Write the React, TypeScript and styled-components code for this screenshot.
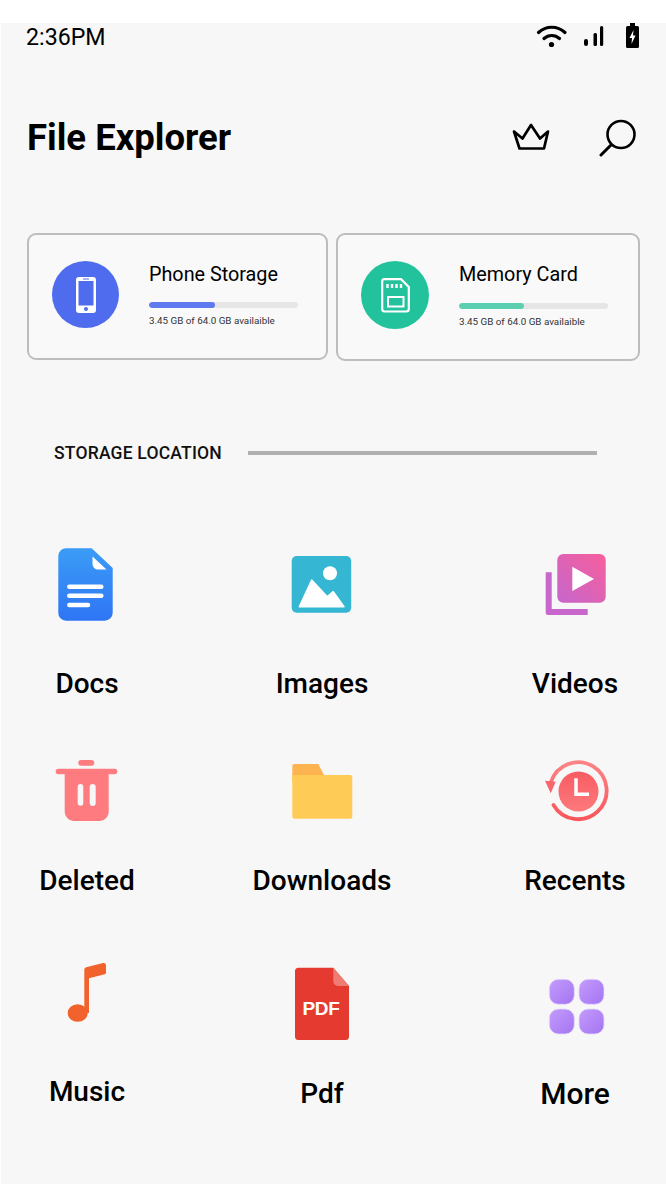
import React from 'react';
import styled, { createGlobalStyle } from 'styled-components';

const GlobalStyle = createGlobalStyle`
  html, body {
    margin: 0;
    padding: 0;
    background: #ffffff;
  }
  body {
    font-family: Roboto, "Liberation Sans", sans-serif;
    color: #000000;
  }
`;

const CrownIcon = () => (
  <svg width="40" height="30" viewBox="0 0 40 30" fill="none">
    <path d="M7.500 25.500H32L36 8.500L28 15.500L19 2L10.500 15.500L2 8.500Z" stroke="#000" strokeWidth="2.700" strokeLinejoin="round" />
  </svg>
);

const SearchIcon = () => (
  <svg width="40" height="38" viewBox="0 0 40 38" fill="none" stroke="#000" strokeLinecap="round">
    <circle cx="23" cy="15.500" r="13.500" strokeWidth="2.600" />
    <path d="M13 26L3 36" strokeWidth="3" />
  </svg>
);

const WifiIcon = () => (
  <svg width="32" height="24" viewBox="0 0 32 24" fill="none" stroke="#000" strokeWidth="3.200" strokeLinecap="round">
    <path d="M2.500 8.500C10 1.500 21.500 1.500 29 8.500" />
    <path d="M8 14.500C12.500 10.500 19 10.500 23.500 14.500" />
    <circle cx="15.500" cy="20.500" r="2.600" fill="#000" stroke="none" />
  </svg>
);

const SignalIcon = () => (
  <svg width="26" height="22" viewBox="0 0 26 22" fill="#000">
    <rect x="0" y="14" width="4" height="7" rx="2" />
    <rect x="9.500" y="8" width="3.500" height="13" rx="1.500" />
    <rect x="16" y="1" width="3.200" height="20" rx="1.500" />
  </svg>
);

const BatteryIcon = () => (
  <svg width="13" height="25" viewBox="0 0 13 25" fill="#000">
    <rect x="4" y="0" width="5" height="4" />
    <rect x="0" y="3" width="13" height="22" rx="1.500" />
    <path d="M7.500 7L3.500 15H6L5.500 21L9.500 12.500H7Z" fill="#fff" />
  </svg>
);

const PhoneGlyph = () => (
  <svg width="20" height="36" viewBox="0 0 20 36" fill="#fff">
    <path fillRule="evenodd" d="M3 0H17A3 3 0 0 1 20 3V33A3 3 0 0 1 17 36H3A3 3 0 0 1 0 33V3A3 3 0 0 1 3 0ZM2.500 4V28.500H17.500V4ZM7 1.500V2.500H13V1.500ZM10 30A2 2 0 1 0 10 34A2 2 0 1 0 10 30Z" />
  </svg>
);

const SdGlyph = () => (
  <svg width="29" height="35" viewBox="0 0 29 35" fill="none" stroke="#fff">
    <path d="M3 1.200H20L27.800 9V31A2.500 2.500 0 0 1 25.300 33.500H3.500A2.500 2.500 0 0 1 1.200 31V3A2 2 0 0 1 3 1.200Z" strokeWidth="2.200" />
    <rect x="7" y="19" width="15.500" height="9.500" strokeWidth="2" />
    <path d="M6.500 6V10M11 6V10M15.500 6V10M20 6V10" strokeWidth="2.400" />
  </svg>
);

const DocsIcon = () => (
  <svg width="80" height="80" viewBox="0 0 80 80">
    <defs>
      <linearGradient id="docsFill" x1="0" y1="0" x2="0" y2="1">
        <stop offset="0" stopColor="#3b9cf6" />
        <stop offset="1" stopColor="#2f75f5" />
      </linearGradient>
    </defs>
    <path d="M19 3.300H44.700L65.700 23V67.700A8 8 0 0 1 57.700 75.700H19A7.700 7.700 0 0 1 11.300 67.700V11A7.700 7.700 0 0 1 19 3.300Z" fill="url(#docsFill)" />
    <path d="M45.500 11.500L59.500 24.500H51A5.500 5.500 0 0 1 45.500 19Z" fill="#fff" />
    <path d="M22.300 41.700H54.300M22.300 50.700H54.300M22.300 60H41" stroke="#fff" strokeWidth="4.500" strokeLinecap="round" />
  </svg>
);

const ImagesIcon = () => (
  <svg width="80" height="80" viewBox="0 0 80 80">
    <rect x="9.700" y="11" width="59.500" height="56.700" rx="5" fill="#35b6d3" />
    <circle cx="48" cy="28.300" r="7" fill="#fff" />
    <path d="M29.700 35L17.300 61.700H62L51.300 46.700L45.300 51.700Z" fill="#fff" stroke="#fff" strokeWidth="1.500" strokeLinejoin="round" />
  </svg>
);

const VideosIcon = () => (
  <svg width="80" height="80" viewBox="0 0 80 80">
    <defs>
      <linearGradient id="videosFill" x1="1" y1="0" x2="0" y2="1">
        <stop offset="0" stopColor="#f85f9b" />
        <stop offset="1" stopColor="#c566cc" />
      </linearGradient>
    </defs>
    <rect x="22.300" y="9" width="48.400" height="48.700" rx="6" fill="url(#videosFill)" />
    <path d="M37.300 21.700L59 34L37.300 46Z" fill="#fff" />
    <path d="M10.700 27.300H16.700V64H52.700V70H13A2.300 2.300 0 0 1 10.700 67.700Z" fill="#c766cb" />
  </svg>
);

const DeletedIcon = () => (
  <svg width="80" height="80" viewBox="0 0 80 80" fill="#fe7b7f">
    <rect x="31.300" y="8" width="16" height="5.700" rx="2.850" />
    <rect x="8.700" y="16.700" width="61.600" height="5.600" rx="2.800" />
    <path fillRule="evenodd" d="M17.700 22H61.700V60A9 9 0 0 1 52.700 69H26.700A9 9 0 0 1 17.700 60ZM33.500 32A2.800 2.800 0 0 0 30.700 34.800V51A2.800 2.800 0 0 0 36.300 51V34.800A2.800 2.800 0 0 0 33.500 32ZM45.700 32A3 3 0 0 0 42.700 35V51A3 3 0 0 0 48.700 51V35A3 3 0 0 0 45.700 32Z" />
  </svg>
);

const DownloadsIcon = () => (
  <svg width="80" height="80" viewBox="0 0 80 80">
    <path d="M12.300 12H36.300L42 23V30H10.300V14A2 2 0 0 1 12.300 12Z" fill="#fdb450" />
    <path d="M10.300 23H68.300A2 2 0 0 1 70.300 25V64.700A2 2 0 0 1 68.300 66.700H12.300A2 2 0 0 1 10.300 64.700Z" fill="#ffcb57" />
  </svg>
);

const RecentsIcon = () => (
  <svg width="80" height="80" viewBox="0 0 80 80" fill="none">
    <defs>
      <linearGradient id="recentsFill" x1="0" y1="0" x2="0" y2="1">
        <stop offset="0" stopColor="#f75c62" />
        <stop offset="1" stopColor="#fd7a7d" />
      </linearGradient>
      <linearGradient id="recentsRing" x1="0" y1="0" x2="0" y2="1">
        <stop offset="0" stopColor="#fb8486" />
        <stop offset="1" stopColor="#f8565c" />
      </linearGradient>
    </defs>
    <path d="M16 30A28.500 28.500 0 1 1 18.500 53" stroke="url(#recentsRing)" strokeWidth="3.800" strokeLinecap="round" />
    <path d="M10 28.700L20.700 29.700L15.700 41.300Z" fill="#f8656a" />
    <circle cx="43.500" cy="39.500" r="20" fill="url(#recentsFill)" />
    <path d="M41 26.300V42.300H54" stroke="#fff" strokeWidth="3.500" />
  </svg>
);

const MusicIcon = () => (
  <svg width="80" height="80" viewBox="0 0 80 80" fill="#f2622d">
    <ellipse cx="30.700" cy="53" rx="10" ry="8.700" />
    <path d="M37.300 53V9.500A2.500 2.500 0 0 1 39.300 7.300L56 3A2.500 2.500 0 0 1 59 5.200V12.800A1.500 1.500 0 0 1 57.800 14.300L42 18.300V53Z" />
  </svg>
);

const PdfIcon = () => (
  <svg width="80" height="80" viewBox="0 0 80 80">
    <path d="M16.500 7.700H51.300L67 26V76.500A3.500 3.500 0 0 1 63.500 80H16.500A3.500 3.500 0 0 1 13 76.500V11.200A3.500 3.500 0 0 1 16.500 7.700Z" fill="#e53a2f" />
    <path d="M51.300 7.700L67 26H56A4.700 4.700 0 0 1 51.300 21.300Z" fill="#ef7c72" />
    <PdfMark x="39" y="55" textAnchor="middle">PDF</PdfMark>
  </svg>
);

const MoreIcon = () => (
  <svg width="80" height="80" viewBox="0 0 80 80">
    <defs>
      <linearGradient id="moreFill" x1="0" y1="0" x2="1" y2="1">
        <stop offset="0" stopColor="#c49cfb" />
        <stop offset="1" stopColor="#a374f2" />
      </linearGradient>
    </defs>
    <g fill="url(#moreFill)" stroke="#e6dafb" strokeWidth="0.800">
      <rect x="14.300" y="19.300" width="25" height="25" rx="9" />
      <rect x="44" y="19.300" width="25" height="25" rx="9" />
      <rect x="14.300" y="49" width="25" height="25" rx="9" />
      <rect x="44" y="49" width="25" height="25" rx="9" />
    </g>
  </svg>
);

const storages = [
  { name: 'Phone Storage', color: '#4f6cee', bar: '#5f79ef', used: 66, glyph: <PhoneGlyph />, width: 301, height: 127, badge: 67, titleRaise: 0 },
  { name: 'Memory Card', color: '#22c29c', bar: '#5ccfb0', used: 65, glyph: <SdGlyph />, width: 304, height: 128, badge: 68, titleRaise: 1 },
];

const rows = [
  {
    top: 82,
    labelGap: 43,
    items: [
      { label: 'Docs', icon: <DocsIcon /> },
      { label: 'Images', icon: <ImagesIcon /> },
      { label: 'Videos', icon: <VideosIcon /> },
    ],
  },
  {
    top: 52,
    labelGap: 33,
    items: [
      { label: 'Deleted', icon: <DeletedIcon /> },
      { label: 'Downloads', icon: <DownloadsIcon /> },
      { label: 'Recents', icon: <RecentsIcon /> },
    ],
  },
  {
    top: 63,
    labelGap: 38,
    items: [
      { label: 'Music', icon: <MusicIcon />, raise: 2 },
      { label: 'Pdf', icon: <PdfIcon /> },
      { label: 'More', icon: <MoreIcon />, size: 30 },
    ],
  },
];

export default function App() {
  return (
    <>
      <GlobalStyle />
      <Screen>
        <StatusBar>
          <Clock>2:36PM</Clock>
          <StatusIcons>
            <WifiIcon />
            <SignalIcon />
            <BatteryIcon />
          </StatusIcons>
        </StatusBar>

        <Header>
          <Title>File Explorer</Title>
          <HeaderActions>
            <CrownIcon />
            <SearchIcon />
          </HeaderActions>
        </Header>

        <Cards>
          {storages.map((s) => (
            <Card key={s.name} $width={s.width} $height={s.height}>
              <Badge $color={s.color} $size={s.badge}>{s.glyph}</Badge>
              <CardBody>
                <CardTitle $raise={s.titleRaise}>{s.name}</CardTitle>
                <Track>
                  <Fill $color={s.bar} style={{ width: `${s.used}px` }} />
                </Track>
                <Usage>3.45 GB of 64.0 GB availaible</Usage>
              </CardBody>
            </Card>
          ))}
        </Cards>

        <SectionHead>
          <SectionTitle>STORAGE LOCATION</SectionTitle>
          <SectionRule />
        </SectionHead>

        {rows.map((row) => (
          <Row key={row.items[0].label} $top={row.top}>
            {row.items.map((item) => (
              <Tile key={item.label}>
                <IconSlot>{item.icon}</IconSlot>
                <TileLabel $gap={row.labelGap - (item.raise ?? 0)} $size={item.size ?? 28}>
                  {item.label}
                </TileLabel>
              </Tile>
            ))}
          </Row>
        ))}
      </Screen>
    </>
  );
}

const Screen = styled.div`
  margin: 23px 0 0 1px;
  height: 1161px;
  background: #f7f7f7;
  overflow: hidden;
`;

const StatusBar = styled.div`
  display: flex;
  align-items: flex-start;
  justify-content: space-between;
  height: 28px;
  padding: 0 27px 0 25px;
`;

const Clock = styled.span`
  font-size: 23.200px;
  line-height: 28px;
`;

const StatusIcons = styled.div`
  display: flex;
  align-items: flex-start;
  gap: 16px;

  svg:nth-child(1) {
    margin-top: 1px;
  }
  svg:nth-child(2) {
    margin-top: 2px;
  }
`;

const Header = styled.div`
  display: flex;
  align-items: center;
  justify-content: space-between;
  height: 44px;
  margin-top: 65px;
  padding: 0 28px 0 26px;
`;

const Title = styled.h1`
  margin: 0;
  font-size: 36.500px;
  font-weight: 700;
  line-height: 44px;
`;

const HeaderActions = styled.div`
  display: flex;
  align-items: center;
  gap: 46px;
`;

const Cards = styled.div`
  display: flex;
  align-items: flex-start;
  gap: 8px;
  margin-top: 73px;
  padding-left: 26px;
`;

const Card = styled.div<{ $width: number; $height: number }>`
  display: flex;
  align-items: center;
  gap: 30px;
  box-sizing: border-box;
  width: ${(p) => p.$width}px;
  height: ${(p) => p.$height}px;
  padding: 0 0 4px 23px;
  border: 2px solid #bdbdbd;
  border-radius: 9px;
  background: #f9f9f9;
`;

const Badge = styled.div<{ $color: string; $size: number }>`
  display: flex;
  align-items: center;
  justify-content: center;
  flex: none;
  width: ${(p) => p.$size}px;
  height: ${(p) => p.$size}px;
  border-radius: 50%;
  background: ${(p) => p.$color};
`;

const CardBody = styled.div`
  display: flex;
  flex-direction: column;
  width: 149px;
  padding-top: 2px;
`;

const CardTitle = styled.div<{ $raise: number }>`
  height: 24px;
  margin-top: ${(p) => -p.$raise}px;
  margin-bottom: ${(p) => 15 + p.$raise}px;
  font-size: 19.800px;
  line-height: 24px;
  white-space: nowrap;
`;

const Track = styled.div`
  height: 6px;
  border-radius: 3px;
  background: #e6e6e6;
  overflow: hidden;
`;

const Fill = styled.div<{ $color: string }>`
  height: 100%;
  border-radius: 3px;
  background: ${(p) => p.$color};
`;

const Usage = styled.div`
  margin-top: 6px;
  font-size: 9.800px;
  line-height: 14px;
  color: #333333;
  white-space: nowrap;
`;

const SectionHead = styled.div`
  display: flex;
  align-items: center;
  gap: 26px;
  height: 20px;
  margin-top: 82px;
  padding-left: 53px;
`;

const SectionTitle = styled.h2`
  margin: 0;
  font-size: 17.500px;
  font-weight: 500;
  line-height: 20px;
  letter-spacing: 0.200px;
  color: #111111;
`;

const SectionRule = styled.div`
  width: 349px;
  height: 4px;
  background: #b0b0b0;
`;

const Row = styled.div<{ $top: number }>`
  display: grid;
  grid-template-columns: 120px 350px 156px;
  margin-top: ${(p) => p.$top}px;
  padding-left: 26px;
`;

const Tile = styled.div`
  display: flex;
  flex-direction: column;
  align-items: center;
`;

const IconSlot = styled.div`
  width: 80px;
  height: 80px;

  svg {
    display: block;
    overflow: visible;
  }
`;

const TileLabel = styled.div<{ $gap: number; $size: number }>`
  margin-top: ${(p) => p.$gap}px;
  font-size: ${(p) => p.$size}px;
  font-weight: 500;
  line-height: 32px;
  white-space: nowrap;
`;

const PdfMark = styled.text`
  font-family: "Liberation Sans", Arial, sans-serif;
  font-size: 19px;
  font-weight: 700;
  letter-spacing: -0.300px;
  fill: #ffffff;
`;
